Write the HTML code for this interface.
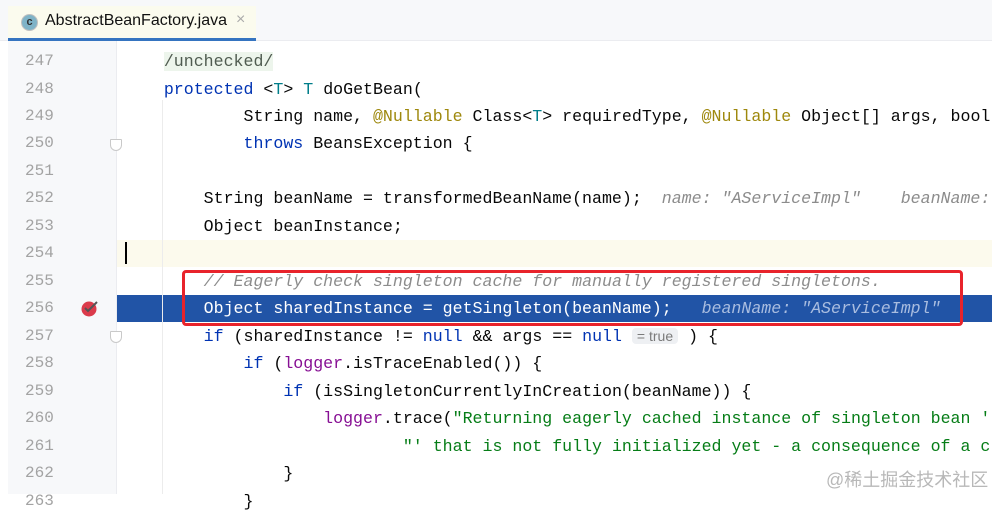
<!DOCTYPE html>
<html><head><meta charset="utf-8"><style>
*{margin:0;padding:0;box-sizing:border-box}
body{width:992px;height:494px;overflow:hidden;background:#fff;position:relative;font-family:"Liberation Mono",monospace}
.topbar{position:absolute;left:0;top:0;width:992px;height:41px;background:#f7f8fa;border-bottom:1px solid #ebecf0}
.tab{position:absolute;left:8px;top:6px;width:248px;height:35px;background:#fbfbee;border-bottom:3px solid #3574c0}
.tab .ic{position:absolute;left:13px;top:8px;width:17px;height:17px;border-radius:50%;background:#7fb3c7;border:1px solid #c0c0c0;font:bold 11px "Liberation Sans",sans-serif;color:#333;text-align:center;line-height:15px}
.tab .t{position:absolute;left:37px;top:6px;font:16px "Liberation Sans",sans-serif;color:#111}
.tab .x{position:absolute;left:228px;top:5px;font:16px "Liberation Sans",sans-serif;color:#aaa}
.gutter{position:absolute;left:8px;top:41px;width:108px;height:453px;background:#f7f8fa}
.sep{position:absolute;left:116px;top:41px;width:1px;height:453px;background:#ebecf0}
.row{position:absolute;left:0;width:992px;height:27.47px;font-size:16.6px;line-height:27.47px;white-space:pre}
.num{position:absolute;left:25px;color:#a3a3a3;font-family:"Liberation Mono",monospace;font-size:16px}
.code{position:absolute;left:124px;color:#080808}
.kw{color:#0033b3}.tp{color:#007e8a}.an{color:#9e880d}.cm{color:#8c8c8c;font-style:italic}.str{color:#067d17}.pu{color:#871094}
.hint{color:#8c8c8c;font-style:italic}
.inlay{background:#eef0f3;color:#7a7a7a;font-family:"Liberation Sans",sans-serif;font-size:14px;border-radius:4px;padding:0 5px}
.fold{position:absolute;left:110px;width:12px;height:12px;border:1px solid #c9c9c9;background:#fff;border-radius:1px 1px 6px 6px}
</style></head><body>
<div class="topbar"></div>
<div class="tab"><div class="ic">c</div><div class="t">AbstractBeanFactory.java</div><div class="x">×</div></div>
<div class="gutter"></div>
<div style="position:absolute;left:117px;top:240px;width:875px;height:27px;background:#fcfaed"></div>
<div style="position:absolute;left:117px;top:295px;width:875px;height:27px;background:#2154a6"></div>
<div class="sep"></div>
<div style="position:absolute;left:162px;top:100px;width:1px;height:394px;background:#ececec"></div>

<div class="row" style="top:48px"><span class="num">247</span><span class="code">    <span style="background:#edf5ec;color:#4f5b50">/unchecked/</span></span></div>
<div class="row" style="top:75.5px"><span class="num">248</span><span class="code">    <span class="kw">protected</span> &lt;<span class="tp">T</span>&gt; <span class="tp">T</span> doGetBean(</span></div>
<div class="row" style="top:103px"><span class="num">249</span><span class="code">            String name, <span class="an">@Nullable</span> Class&lt;<span class="tp">T</span>&gt; requiredType, <span class="an">@Nullable</span> Object[] args, bool</span></div>
<div class="row" style="top:130.4px"><span class="num">250</span><span class="code">            <span class="kw">throws</span> BeansException {</span></div>
<div class="row" style="top:157.9px"><span class="num">251</span></div>
<div class="row" style="top:185.4px"><span class="num">252</span><span class="code">        String beanName = transformedBeanName(name);  <span class="hint">name: "AServiceImpl"    beanName:</span></span></div>
<div class="row" style="top:212.8px"><span class="num">253</span><span class="code">        Object beanInstance;</span></div>
<div class="row" style="top:240.3px"><span class="num">254</span></div>
<div style="position:absolute;left:125px;top:242px;width:1.5px;height:22px;background:#000"></div>
<div class="row" style="top:267.8px"><span class="num">255</span><span class="code">        <span class="cm">// Eagerly check singleton cache for manually registered singletons.</span></span></div>
<div class="row" style="top:295.2px"><span class="num">256</span><span class="code" style="color:#fff">        Object sharedInstance = getSingleton(beanName);   <span class="hint" style="color:#a9bde0">beanName: "AServiceImpl"</span></span></div>
<div class="row" style="top:322.7px"><span class="num">257</span><span class="code">        <span class="kw">if</span> (sharedInstance != <span class="kw">null</span> &amp;&amp; args == <span class="kw">null</span> <span class="inlay">= true</span> ) {</span></div>
<div class="row" style="top:350.2px"><span class="num">258</span><span class="code">            <span class="kw">if</span> (<span class="pu">logger</span>.isTraceEnabled()) {</span></div>
<div class="row" style="top:377.6px"><span class="num">259</span><span class="code">                <span class="kw">if</span> (isSingletonCurrentlyInCreation(beanName)) {</span></div>
<div class="row" style="top:405.1px"><span class="num">260</span><span class="code">                    <span class="pu">logger</span>.trace(<span class="str">"Returning eagerly cached instance of singleton bean '</span></span></div>
<div class="row" style="top:432.6px"><span class="num">261</span><span class="code">                            <span class="str">"' that is not fully initialized yet - a consequence of a c</span></span></div>
<div class="row" style="top:460px"><span class="num">262</span><span class="code">                }</span></div>
<div class="row" style="top:487.5px"><span class="num">263</span><span class="code">            }</span></div>

<div class="fold" style="top:139px"></div>
<div class="fold" style="top:331px"></div>

<svg style="position:absolute;left:80px;top:298px" width="22" height="20" viewBox="0 0 22 20">
<circle cx="9" cy="11" r="7.5" fill="#db3b4b"/>
<path d="M5 10 l3 3 l9-9" stroke="#555" stroke-width="2" fill="none"/>
</svg>

<div style="position:absolute;left:182px;top:270px;width:781px;height:56px;border:3px solid #e8232b;border-radius:4px"></div>

<div style="position:absolute;left:826px;top:466px;font:18px 'Liberation Sans','Noto Sans CJK SC',sans-serif;color:#b8b8b8">@稀土掘金技术社区</div>
</body></html>
